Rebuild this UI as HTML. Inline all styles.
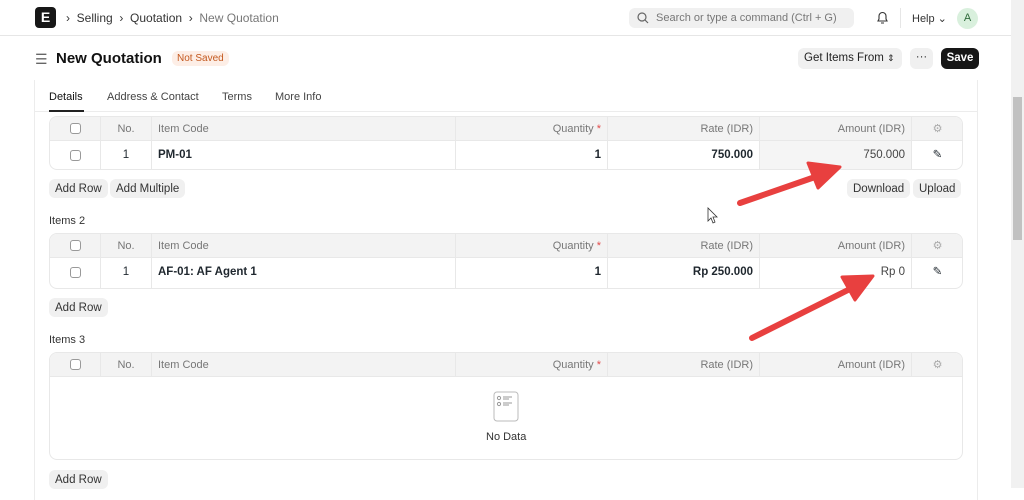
<!DOCTYPE html>
<html><head><meta charset="utf-8"><style>
*{box-sizing:border-box;margin:0;padding:0}
body{width:1024px;height:488px;overflow:hidden;background:#fff;font-family:"Liberation Sans",sans-serif;color:#1f272e;position:relative}
.a{position:absolute;white-space:nowrap}
.t{font-size:11px;color:#555}
.btn{position:absolute;white-space:nowrap;background:#f0f0f0;border-radius:6px;font-size:11.5px;color:#333;height:19px;line-height:20px;padding:0 6px}
.tbl{position:absolute;left:49px;width:914px;border:1px solid #e8e8e8;border-radius:8px;overflow:hidden}
.hd{height:24px;background:#f3f3f3;border-bottom:1px solid #e8e8e8;position:relative}
.rw{height:29px;position:relative}
.c{position:absolute;top:0;bottom:0;border-right:1px solid #e8e8e8;font-size:11px;line-height:24px;color:#777;white-space:nowrap}
.rw .c{line-height:29px;color:#1f272e;font-size:11.5px}
.cb{position:absolute;width:11px;height:11px;border:1px solid #999;border-radius:3px;left:20px;top:6px;background:#fff}
.rw .cb{top:9px}
.r{text-align:right;padding-right:6px}
.pen{font-size:10px}
</style></head><body>
<div class="a" style="left:0;top:0;width:1011px;height:36px;border-bottom:1px solid #e6e6e6"></div>
<div class="a" style="left:35px;top:7px;width:21px;height:21px;background:#171717;border-radius:4px;color:#fff;font-weight:bold;font-size:14px;text-align:center;line-height:21px">E</div>
<div class="a" style="left:66px;top:11px;font-size:12px;color:#333">›&nbsp; Selling &nbsp;›&nbsp; Quotation &nbsp;›&nbsp; <span style="color:#777">New Quotation</span></div>
<div class="a" style="left:629px;top:8px;width:225px;height:20px;background:#f0f0f0;border-radius:6px"></div>
<svg class="a" style="left:637px;top:12px" width="12" height="12" viewBox="0 0 12 12"><circle cx="5" cy="5" r="4" fill="none" stroke="#666" stroke-width="1.2"/><path d="M8 8l3 3" stroke="#666" stroke-width="1.2"/></svg>
<div class="a" style="left:656px;top:12px;font-size:11px;color:#777">Search or type a command (Ctrl + G)</div>
<svg class="a" style="left:876px;top:11px" width="13" height="14" viewBox="0 0 13 14"><path d="M2 10h9l-1-2V5a3.5 3.5 0 0 0-7 0v3z M5 12h3" fill="none" stroke="#333" stroke-width="1.1"/></svg>
<div class="a" style="left:900px;top:8px;width:1px;height:20px;background:#e6e6e6"></div>
<div class="a" style="left:912px;top:12px;font-size:11px;color:#333">Help ⌄</div>
<div class="a" style="left:957px;top:8px;width:21px;height:21px;background:#d9f0dd;border-radius:50%;font-size:11px;text-align:center;line-height:21px;color:#2e6b3a">A</div>
<div class="a" style="left:1011px;top:0;width:13px;height:488px;background:#f1f1f1"></div>
<div class="a" style="left:1013px;top:97px;width:9px;height:143px;background:#c1c1c1"></div>
<div class="a" style="left:35px;top:51px;font-size:14px;color:#666">☰</div>
<div class="a" style="left:56px;top:50px;font-size:15px;font-weight:bold;color:#111">New Quotation</div>
<div class="a" style="left:172px;top:51px;height:15px;line-height:15px;padding:0 5px;background:#fdeee6;color:#c4591f;border-radius:6px;font-size:10px">Not Saved</div>
<div class="btn" style="left:798px;top:48px;height:21px;line-height:21px;width:104px;padding:0 6px;color:#222">Get Items From <span style="font-size:9px">⇕</span></div>
<div class="btn" style="left:910px;top:48px;height:21px;line-height:19px;width:23px;text-align:center;padding:0">···</div>
<div class="a" style="left:941px;top:48px;width:38px;height:21px;background:#171717;color:#fff;border-radius:6px;font-size:11.5px;font-weight:bold;text-align:center;line-height:21px">Save</div>
<div class="a" style="left:34px;top:80px;width:944px;height:420px;border-left:1px solid #ececec;border-right:1px solid #ececec"></div>
<div class="a" style="left:35px;top:111px;width:942px;height:1px;background:#ececec"></div>
<div class="a" style="left:49px;top:91px;font-size:11px;color:#111">Details</div>
<div class="a" style="left:49px;top:110px;width:35px;height:2px;background:#222"></div>
<div class="a" style="left:107px;top:91px;font-size:11px;color:#444">Address &amp; Contact</div>
<div class="a" style="left:222px;top:91px;font-size:11px;color:#444">Terms</div>
<div class="a" style="left:275px;top:91px;font-size:11px;color:#444">More Info</div>

<div class="tbl" style="top:116px;height:54px">
<div class="hd"><div class="c" style="left:0;width:51px"><div class="cb"></div></div><div class="c" style="left:51px;width:51px;text-align:center">No.</div><div class="c" style="left:102px;width:304px;padding-left:6px">Item Code</div><div class="c r" style="left:406px;width:152px">Quantity <span style="color:#e24c4c">*</span></div><div class="c r" style="left:558px;width:152px">Rate (IDR)</div><div class="c r" style="left:710px;width:152px">Amount (IDR)</div><div class="c" style="left:862px;width:51px;border:0;text-align:center;color:#aaa">⚙</div></div>
<div class="rw"><div class="c" style="left:0;width:51px"><div class="cb"></div></div><div class="c" style="left:51px;width:51px;text-align:center">1</div><div class="c" style="left:102px;width:304px;padding-left:6px;font-weight:bold">PM-01</div><div class="c r" style="left:406px;width:152px;font-weight:bold">1</div><div class="c r" style="left:558px;width:152px;font-weight:bold">750.000</div><div class="c r" style="left:710px;width:152px;background:#f5f5f5;color:#444">750.000</div><div class="c pen" style="left:862px;width:51px;border:0;text-align:center">✎</div></div>
</div>
<div class="btn" style="left:49px;top:179px">Add Row</div>
<div class="btn" style="left:110px;top:179px">Add Multiple</div>
<div class="btn" style="left:847px;top:179px">Download</div>
<div class="btn" style="left:913px;top:179px">Upload</div>

<div class="a t" style="left:49px;top:215px;color:#333">Items 2</div>
<div class="tbl" style="top:233px;height:56px">
<div class="hd"><div class="c" style="left:0;width:51px"><div class="cb"></div></div><div class="c" style="left:51px;width:51px;text-align:center">No.</div><div class="c" style="left:102px;width:304px;padding-left:6px">Item Code</div><div class="c r" style="left:406px;width:152px">Quantity <span style="color:#e24c4c">*</span></div><div class="c r" style="left:558px;width:152px">Rate (IDR)</div><div class="c r" style="left:710px;width:152px">Amount (IDR)</div><div class="c" style="left:862px;width:51px;border:0;text-align:center;color:#aaa">⚙</div></div>
<div class="rw" style="height:31px"><div class="c" style="left:0;width:51px"><div class="cb"></div></div><div class="c" style="left:51px;width:51px;text-align:center">1</div><div class="c" style="left:102px;width:304px;padding-left:6px;font-weight:bold">AF-01: AF Agent 1</div><div class="c r" style="left:406px;width:152px;font-weight:bold">1</div><div class="c r" style="left:558px;width:152px;font-weight:bold">Rp 250.000</div><div class="c r" style="left:710px;width:152px;color:#444">Rp 0</div><div class="c pen" style="left:862px;width:51px;border:0;text-align:center">✎</div></div>
</div>
<div class="btn" style="left:49px;top:298px">Add Row</div>

<div class="a t" style="left:49px;top:334px;color:#333">Items 3</div>
<div class="tbl" style="top:352px;height:108px">
<div class="hd"><div class="c" style="left:0;width:51px"><div class="cb"></div></div><div class="c" style="left:51px;width:51px;text-align:center">No.</div><div class="c" style="left:102px;width:304px;padding-left:6px">Item Code</div><div class="c r" style="left:406px;width:152px">Quantity <span style="color:#e24c4c">*</span></div><div class="c r" style="left:558px;width:152px">Rate (IDR)</div><div class="c r" style="left:710px;width:152px">Amount (IDR)</div><div class="c" style="left:862px;width:51px;border:0;text-align:center;color:#aaa">⚙</div></div>
</div>
<svg class="a" style="left:493px;top:391px" width="26" height="31" viewBox="0 0 26 31"><rect x="1" y="1" width="24" height="29" rx="3" fill="none" stroke="#bbb"/><circle cx="6" cy="7" r="1.6" fill="none" stroke="#999"/><circle cx="6" cy="13" r="1.6" fill="none" stroke="#999"/><path d="M10 6h9M10 8h6M10 12h9M10 14h6" stroke="#999"/></svg>
<div class="a" style="left:486px;top:431px;font-size:11px;color:#333">No Data</div>
<div class="btn" style="left:49px;top:470px">Add Row</div>

<svg class="a" style="left:0;top:0" width="1011" height="488">
<path d="M740 203L815 177" stroke="#e8403f" stroke-width="6" stroke-linecap="round"/>
<path d="M808 163L840 167L818 188Z" fill="#e8403f" stroke="#e8403f" stroke-width="3" stroke-linejoin="round"/>
<path d="M752 338L850 289" stroke="#e8403f" stroke-width="6" stroke-linecap="round"/>
<path d="M842 277L873 276L855 300Z" fill="#e8403f" stroke="#e8403f" stroke-width="3" stroke-linejoin="round"/>
<path d="M708 208v13l3-3 2 5 2-1-2-5h4z" fill="#fff" stroke="#333" stroke-width=".8"/>
</svg>
</body></html>
